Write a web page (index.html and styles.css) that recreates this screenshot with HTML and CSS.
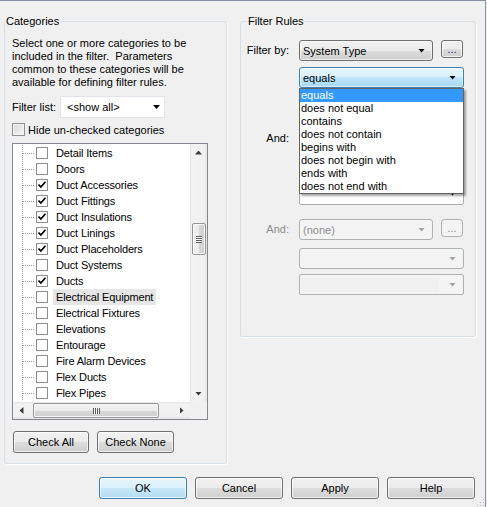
FILE: index.html
```html
<!DOCTYPE html>
<html lang="en">
<head>
  <meta charset="UTF-8" />
  <title>Filters</title>
  <link rel="stylesheet" href="styles.css">
</head>
<body>
  <div class="dialog">
    <div class="panels">
      <fieldset class="group categories">
        <legend>Categories</legend>
        <p class="intro">Select one or more categories to be<br>included in the filter.&nbsp; Parameters<br>common to these categories will be<br>available for defining filter rules.</p>

        <div class="filter-list">
          <span class="filter-label">Filter list:</span>
          <div class="combo flat"><span class="combo-text">&lt;show all&gt;</span><i class="arrow"></i></div>
        </div>

        <div class="hide-unchecked"><span class="checkbox"></span>Hide un-checked categories</div>

        <div class="tree">
          <div class="tree-body">
            <ul class="tree-items">
              <li><span class="branch"></span><span class="node-box"></span><span class="node-label">Detail Items</span></li>
              <li><span class="branch"></span><span class="node-box"></span><span class="node-label">Doors</span></li>
              <li><span class="branch"></span><span class="node-box checked"></span><span class="node-label">Duct Accessories</span></li>
              <li><span class="branch"></span><span class="node-box checked"></span><span class="node-label">Duct Fittings</span></li>
              <li><span class="branch"></span><span class="node-box checked"></span><span class="node-label">Duct Insulations</span></li>
              <li><span class="branch"></span><span class="node-box checked"></span><span class="node-label">Duct Linings</span></li>
              <li><span class="branch"></span><span class="node-box checked"></span><span class="node-label">Duct Placeholders</span></li>
              <li><span class="branch"></span><span class="node-box"></span><span class="node-label">Duct Systems</span></li>
              <li><span class="branch"></span><span class="node-box checked"></span><span class="node-label">Ducts</span></li>
              <li><span class="branch"></span><span class="node-box"></span><span class="node-label selected">Electrical Equipment</span></li>
              <li><span class="branch"></span><span class="node-box"></span><span class="node-label">Electrical Fixtures</span></li>
              <li><span class="branch"></span><span class="node-box"></span><span class="node-label">Elevations</span></li>
              <li><span class="branch"></span><span class="node-box"></span><span class="node-label">Entourage</span></li>
              <li><span class="branch"></span><span class="node-box"></span><span class="node-label">Fire Alarm Devices</span></li>
              <li><span class="branch"></span><span class="node-box"></span><span class="node-label">Flex Ducts</span></li>
              <li><span class="branch"></span><span class="node-box"></span><span class="node-label">Flex Pipes</span></li>
            </ul>
            <div class="vscroll">
              <div class="scroll-btn"><i class="sarrow up"></i></div>
              <div class="vtrack"><div class="vthumb"><span class="grip"></span></div></div>
              <div class="scroll-btn"><i class="sarrow down"></i></div>
            </div>
          </div>
          <div class="hscroll">
            <div class="scroll-btn"><i class="sarrow left"></i></div>
            <div class="htrack"><div class="hthumb"><span class="grip"></span></div></div>
            <div class="scroll-btn"><i class="sarrow right"></i></div>
            <div class="scroll-corner"></div>
          </div>
        </div>

        <div class="check-buttons">
          <button class="btn check-all">Check All</button>
          <button class="btn check-none">Check None</button>
        </div>
      </fieldset>

      <fieldset class="group rules">
        <legend>Filter Rules</legend>

        <div class="rule">
          <div class="rule-row">
            <span class="rule-label">Filter by:</span>
            <div class="combo list"><span class="combo-text">System Type</span><i class="arrow"></i></div>
            <button class="btn more">...</button>
          </div>
          <div class="rule-row indent">
            <div class="combo-wrap">
              <div class="combo list hot wide"><span class="combo-text">equals</span><i class="arrow"></i></div>
              <ul class="dropdown">
                <li class="active">equals</li>
                <li>does not equal</li>
                <li>contains</li>
                <li>does not contain</li>
                <li>begins with</li>
                <li>does not begin with</li>
                <li>ends with</li>
                <li>does not end with</li>
              </ul>
            </div>
          </div>
          <div class="rule-row indent">
            <div class="combo edit wide"><span class="field"></span><i class="arrow"></i></div>
          </div>
        </div>

        <!-- second rule sits under the open dropdown -->
        <div class="rule second">
          <div class="rule-row">
            <span class="rule-label">And:</span>
            <div class="combo list"><span class="combo-text"></span><i class="arrow"></i></div>
            <button class="btn more"></button>
          </div>
          <div class="rule-row indent">
            <div class="combo list wide"><span class="combo-text"></span><i class="arrow"></i></div>
          </div>
          <div class="rule-row indent">
            <div class="combo edit wide tall"><span class="field"></span><i class="arrow"></i></div>
          </div>
        </div>

        <div class="rule third disabled">
          <div class="rule-row">
            <span class="rule-label">And:</span>
            <div class="combo list"><span class="combo-text">(none)</span><i class="arrow"></i></div>
            <button class="btn more">...</button>
          </div>
          <div class="rule-row indent op">
            <div class="combo list wide"><span class="combo-text"></span><i class="arrow"></i></div>
          </div>
          <div class="rule-row indent val">
            <div class="combo edit wide"><span class="field"></span><i class="arrow"></i></div>
          </div>
        </div>
      </fieldset>
    </div>

    <div class="footer">
      <button class="btn default">OK</button>
      <button class="btn">Cancel</button>
      <button class="btn">Apply</button>
      <button class="btn">Help</button>
    </div>
    <span class="size-grip"></span>
  </div>
</body>
</html>
```

FILE: styles.css
```css
* {
  box-sizing: border-box;
}

html, body {
  margin: 0;
  padding: 0;
  background: #f0f0f0;
}

body {
  font-family: "Liberation Sans", Arial, sans-serif;
  font-size: 11px;
  color: #000;
}

.dialog {
  position: relative;
  width: 486px;
  height: 507px;
  border-top: 1px solid #8592a3;
  border-right: 1px solid #8592a3;
}

.panels {
  display: flex;
  align-items: flex-start;
  gap: 13px;
  padding: 13px 0 0 4px;
}

/* group boxes */
.group {
  margin: 0;
  min-width: 0;
  border: 1px solid #d5dfe5;
  border-radius: 3px;
  box-shadow: 1px 1px 0 #fff;
}

.group legend {
  padding: 0 1px;
  line-height: 14px;
}

.categories {
  width: 223px;
  padding: 9px 7px 10px 7px;
}

.categories legend {
  margin-left: -7px;
}

.rules {
  width: 236px;
  padding: 12px 5px 41px 5px;
}

.rules legend {
  margin-left: 1px;
}

.intro {
  margin: 0;
  line-height: 13px;
}

/* combos */
.combo {
  display: flex;
  align-items: center;
  height: 21px;
  border: 1px solid #707070;
  border-radius: 3px;
  background: linear-gradient(#f2f2f2 0%, #ebebeb 50%, #dddddd 50%, #cfcfcf 100%);
  box-shadow: inset 0 0 0 1px rgba(255,255,255,0.6);
  padding: 0 7px 0 3px;
}

.combo-text {
  flex: 1;
  white-space: nowrap;
}

.arrow {
  width: 7px;
  height: 4px;
  background: #000;
  clip-path: polygon(0 0, 100% 0, 50% 100%);
}

.combo.flat {
  width: 105px;
  height: 22px;
  background: #fff;
  border-color: #e2e3ea;
  border-radius: 0;
  box-shadow: none;
  padding: 0 4px 0 6px;
}

.combo.hot {
  border-color: #3c7fb1;
  background: linear-gradient(#eaf6fd 0%, #d9f0fc 50%, #bee6fd 50%, #a7d9f5 100%);
}

.combo.edit {
  background: #fff;
  border-color: #abadb3;
  border-radius: 2px;
  padding: 2px 7px 2px 2px;
  box-shadow: none;
}

.combo.edit .field {
  flex: 1;
  align-self: stretch;
  margin-right: 10px;
}

.combo.tall {
  height: 23px;
}

.combo.list {
  width: 134px;
}

.combo.wide {
  width: 165px;
}

/* filter list row */
.filter-list {
  display: flex;
  align-items: center;
  margin-top: 7px;
}

.filter-label {
  width: 48px;
}

.hide-unchecked {
  display: flex;
  align-items: center;
  gap: 3px;
  height: 15px;
  margin-top: 4px;
}

.checkbox {
  width: 13px;
  height: 13px;
  border: 1px solid #8e8f8f;
  background: linear-gradient(135deg, #d8d8d8, #f8f8f8);
  box-shadow: inset 0 0 0 1px #f4f4f4;
}

/* tree */
.tree {
  margin-top: 6px;
  width: 196px;
  border: 1px solid #828790;
  background: #fff;
}

.tree-body {
  display: flex;
  height: 258px;
}

.tree-items {
  list-style: none;
  margin: 0;
  padding: 1px 0 0;
  flex: 1;
  overflow: hidden;
}

.tree-items li {
  display: flex;
  align-items: center;
  height: 16px;
  padding-left: 9px;
  white-space: nowrap;
}

.branch {
  width: 12px;
  height: 16px;
  background:
    repeating-linear-gradient(to bottom, #a0a0a0 0 1px, transparent 1px 2px) left top / 1px 100% no-repeat,
    repeating-linear-gradient(to right, #a0a0a0 0 1px, transparent 1px 2px) 1px 8px / 11px 1px no-repeat;
}

.node-box {
  width: 12px;
  height: 12px;
  margin-left: 2px;
  border: 1px solid #8f8f8f;
  background: #fff;
}

.node-box.checked {
  background: #fff url("data:image/svg+xml,%3Csvg xmlns='http://www.w3.org/2000/svg' width='10' height='10'%3E%3Cpath d='M1.5 4.5 L3.8 7 L8.5 1.8' fill='none' stroke='%23000' stroke-width='1.7'/%3E%3C/svg%3E") center / 10px 10px no-repeat;
}

.node-label {
  margin-left: 5px;
  padding: 0 3px;
  line-height: 16px;
  letter-spacing: -0.15px;
}

.node-label.selected {
  background: #e6e6e6;
}

/* scrollbars */
.vscroll {
  width: 17px;
  display: flex;
  flex-direction: column;
  background: linear-gradient(to right, #e3e3e3 0, #f3f3f3 2px, #f0f0f0 14px, #e6e6e6 17px);
}

.scroll-btn {
  width: 17px;
  height: 17px;
  display: flex;
  align-items: center;
  justify-content: center;
}

.sarrow {
  background: #3c3c3c;
}

.sarrow.up {
  width: 7px;
  height: 4px;
  clip-path: polygon(50% 0, 100% 100%, 0 100%);
}

.sarrow.down {
  width: 7px;
  height: 4px;
  clip-path: polygon(0 0, 100% 0, 50% 100%);
}

.sarrow.left {
  width: 4px;
  height: 7px;
  clip-path: polygon(100% 0, 100% 100%, 0 50%);
}

.sarrow.right {
  width: 4px;
  height: 7px;
  clip-path: polygon(0 0, 100% 50%, 0 100%);
}

.vtrack {
  flex: 1;
  padding: 62px 1px 0 2px;
}

.vthumb {
  width: 14px;
  height: 32px;
  border: 1px solid #979797;
  border-radius: 2px;
  background: linear-gradient(to right, #f2f2f2, #ebebeb 50%, #d8d8d8 51%, #cfcfcf);
  box-shadow: inset 0 0 0 1px #f8f8f8;
  display: flex;
  align-items: center;
  justify-content: center;
}

.vthumb .grip {
  width: 6px;
  height: 7px;
  background: repeating-linear-gradient(to bottom, #606060 0 1px, #f8f8f8 1px 2px);
}

.hscroll {
  display: flex;
  height: 17px;
  background: linear-gradient(to bottom, #e3e3e3 0, #f3f3f3 2px, #f0f0f0 14px, #e6e6e6 17px);
}

.htrack {
  flex: 1;
  padding: 1px 0 0 3px;
}

.hthumb {
  width: 126px;
  height: 15px;
  border: 1px solid #979797;
  border-radius: 2px;
  background: linear-gradient(#f2f2f2, #ebebeb 50%, #d8d8d8 51%, #cfcfcf);
  box-shadow: inset 0 0 0 1px #f8f8f8;
  display: flex;
  align-items: center;
  justify-content: center;
}

.hthumb .grip {
  width: 7px;
  height: 6px;
  background: repeating-linear-gradient(to right, #606060 0 1px, #f8f8f8 1px 2px);
}

.scroll-corner {
  width: 17px;
  background: #f0f0f0;
}

/* buttons */
.btn {
  height: 22px;
  padding: 0;
  border: 1px solid #707070;
  border-radius: 3px;
  background: linear-gradient(#f2f2f2 0%, #ebebeb 50%, #dddddd 50%, #cfcfcf 100%);
  box-shadow: inset 0 0 0 1px rgba(255,255,255,0.7);
  font: inherit;
  color: #000;
}

.check-buttons {
  display: flex;
  gap: 8px;
  margin: 11px 0 0 1px;
}

.check-all {
  width: 76px;
}

.check-none {
  width: 77px;
}

.btn.more {
  width: 22px;
  height: 18px;
  margin-left: 8px;
  line-height: 12px;
  color: #1a1a6e;
}

.btn.default {
  border-color: #3c7fb1;
  background: linear-gradient(#eaf6fd 0%, #d9f0fc 50%, #c6e7f9 50%, #b5dcf3 100%);
}

/* filter rules */
.rule-row {
  display: flex;
  align-items: flex-start;
  margin-top: 6px;
}

.rule-row:first-child {
  margin-top: 0;
}

.rule-row.indent {
  padding-left: 53px;
}

.rule.second {
  margin-top: 13px;
}

.rule.third {
  margin-top: 14px;
}

.rule.third .op {
  margin-top: 8px;
}

.rule.third .val {
  margin-top: 5px;
}

.rule-label {
  width: 43px;
  margin-right: 10px;
  line-height: 21px;
  text-align: right;
}

.combo-wrap {
  position: relative;
}

.dropdown {
  position: absolute;
  top: 100%;
  left: 0;
  z-index: 5;
  width: 165px;
  margin: 0;
  padding: 0;
  list-style: none;
  background: #fff;
  border: 1px solid #646464;
  box-shadow: 2px 2px 2px rgba(0,0,0,0.35);
}

.dropdown li {
  height: 13px;
  line-height: 13px;
  padding-left: 1px;
  white-space: nowrap;
}

.dropdown li.active {
  background: #3399ff;
  color: #fff;
}

.disabled .rule-label,
.disabled .combo-text,
.disabled .btn {
  color: #8d8d8d;
}

.disabled .combo,
.disabled .btn {
  border-color: #adb2b5;
  background: #f4f4f4;
  box-shadow: none;
}

.disabled .combo.edit .field {
  background: #f0f0f0;
}

.disabled .arrow {
  background: #a3a3a3;
}

/* footer */
.footer {
  display: flex;
  justify-content: flex-end;
  gap: 8px;
  margin-top: 13px;
  padding-right: 10px;
}

.footer .btn {
  width: 88px;
}

.size-grip {
  position: absolute;
  right: 1px;
  bottom: 1px;
  width: 8px;
  height: 8px;
  background: radial-gradient(circle, #b5b5b5 0.7px, transparent 0.8px) 0 0 / 3px 3px;
  clip-path: polygon(100% 0, 100% 100%, 0 100%);
}
```
